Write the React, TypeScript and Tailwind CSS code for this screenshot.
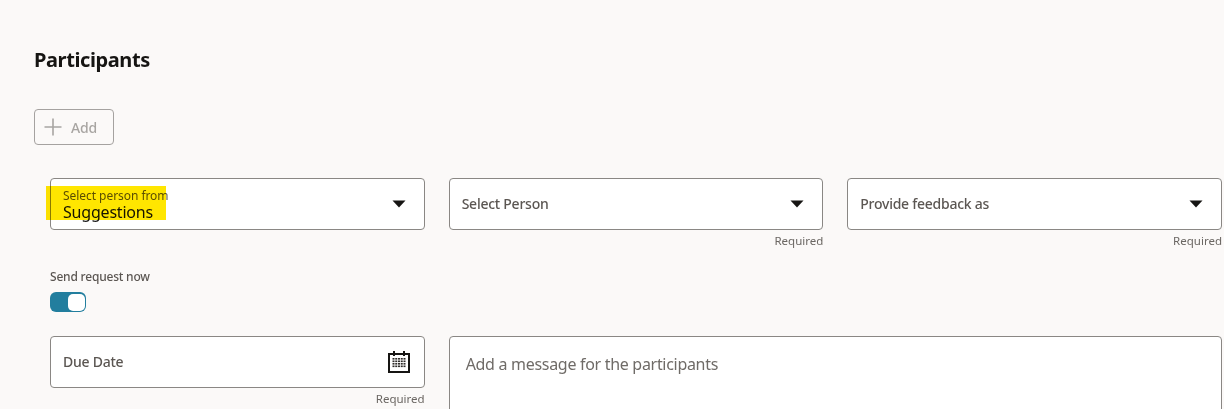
import React from "react";

const Caret = () => (
  <svg width="14" height="8" viewBox="0 0 14 8" className="shrink-0">
    <path d="M0.5 0.5H13.5L7 7.5Z" fill="#161513" />
  </svg>
);

const Required = () => (
  <div className="text-right text-[11.5px] leading-[16px] mt-[3px] text-[#6b6763]">Required</div>
);

const Field = ({ label }: { label: string }) => (
  <div className="flex flex-col">
    <div className="h-[52px] rounded-[4px] border border-[#8a8784] bg-white flex items-center justify-between pl-3 pr-[18px]">
      <span className="pb-[2px] text-[14px] tracking-[-0.25px] font-medium text-[#5b5652]">{label}</span>
      <Caret />
    </div>
    <Required />
  </div>
);

const CalendarIcon = () => (
  <svg width="22" height="22" viewBox="0 0 22 22" className="shrink-0">
    <rect x="1" y="3" width="20" height="18" fill="#fff" stroke="#161513" strokeWidth="2" />
    <rect x="5" y="0" width="2" height="5" fill="#161513" />
    <rect x="15" y="0" width="2" height="5" fill="#161513" />
    {[7, 9.5, 12, 14.5].map((y) =>
      [4.5, 7.25, 10, 12.75, 15.5].map((x) => (
        <rect key={`${x}-${y}`} x={x} y={y} width="2" height="1.6" fill="#2e2b29" />
      ))
    )}
  </svg>
);

export default function App() {
  return (
    <div className="h-[409px] w-[1224px] overflow-hidden bg-[#fbf9f8] font-['Noto_Sans',sans-serif] flex flex-col">
      <h1 className="pl-[34px] pt-[46px] text-[20px] leading-[28px] font-bold tracking-[-0.4px] text-[#161513]">Participants</h1>
      <div className="pl-[34px] mt-[35px]">
        <button className="h-9 w-20 rounded-[4px] border border-[#a5a2a0] flex items-center pl-[9px] gap-[9px] text-[14px] font-medium tracking-[-0.2px] text-[#a8a5a2]">
          <svg width="18" height="18" viewBox="0 0 18 18" className="shrink-0">
            <path d="M9 0.5V17.5M0.5 9H17.5" stroke="#a8a5a2" strokeWidth="1.6" />
          </svg>
          Add
        </button>
      </div>
      <div className="pl-[50px] pr-[2px] mt-[33px]">
        <div className="grid grid-cols-3 gap-x-6">
          <div className="relative h-[52px] rounded-[4px] border border-[#8a8784] bg-white flex items-center justify-between pl-3 pr-[18px]">
            <div className="flex flex-col pt-[2px]">
              <span className="text-[12px] leading-[14px] tracking-[-0.05px] text-[#5b5652]">Select person from</span>
              <span className="text-[16px] leading-[19px] tracking-[-0.2px] text-[#161513]">Suggestions</span>
            </div>
            <Caret />
            <div className="absolute left-[-5px] top-[7px] w-[120px] h-[34px] bg-[#ffe600] mix-blend-multiply" />
          </div>
          <Field label="Select Person" />
          <Field label="Provide feedback as" />
        </div>
        <div className="text-[12px] leading-[16px] font-medium tracking-[-0.2px] text-[#5b5652] mt-5">Send request now</div>
        <div className="mt-[7px] h-5 w-9 rounded-[6px] bg-[#227e9e] flex items-center justify-end pr-[1px]">
          <div className="h-[17px] w-[17px] rounded-[5px] bg-white" />
        </div>
        <div className="grid grid-cols-3 gap-x-6 mt-6">
          <div className="flex flex-col">
            <div className="h-[52px] rounded-[4px] border border-[#8a8784] bg-white flex items-center justify-between pl-3 pr-[14px]">
              <span className="pb-[2px] text-[14px] tracking-[-0.25px] font-medium text-[#5b5652]">Due Date</span>
              <CalendarIcon />
            </div>
            <Required />
          </div>
          <div className="col-span-2 h-[120px] rounded-[4px] border border-[#8a8784] bg-white px-4 pt-[15px] text-[16px] leading-[24px] tracking-[-0.3px] text-[#6f6b67]">
            Add a message for the participants
          </div>
        </div>
      </div>
    </div>
  );
}
